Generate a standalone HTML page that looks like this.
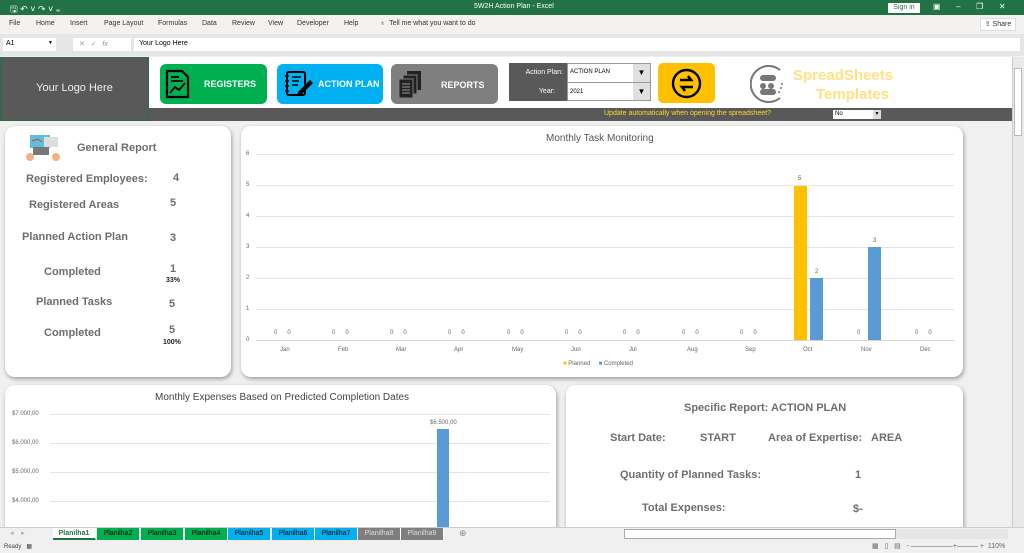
<!DOCTYPE html>
<html><head><meta charset="utf-8"><style>
*{margin:0;padding:0;box-sizing:border-box}
body{width:1024px;height:553px;overflow:hidden;font-family:"Liberation Sans",sans-serif;background:#f0f0f0;position:relative}
.a{position:absolute}
.t{position:absolute;white-space:nowrap}
.card{position:absolute;background:#fff;border-radius:10px;box-shadow:1px 2px 4px rgba(0,0,0,.35)}
.gr{color:#6e6e6e;font-weight:bold}
.btn{position:absolute;border-radius:6px;color:#fff;font-weight:bold;font-size:9px}
.ax{font-size:6px;color:#666}
.tab{position:absolute;top:528px;height:12px;font-size:7px;text-align:center;line-height:12px;border-right:1px solid #fff}
</style></head><body>
<div class="a" style="left:0;top:0;width:1024px;height:15px;background:#217346"></div>
<div class="t" style="left:10px;top:2px;color:#fff;font-size:9px">🖫 ↶ ˅ ↷ ˅ ₌</div>
<div class="t" style="left:474px;top:3px;color:#fff;font-size:7px">5W2H Action Plan - Excel</div>
<div class="a" style="left:888px;top:3px;width:32px;height:10px;background:#fff;color:#217346;font-size:7px;text-align:center;line-height:10px">Sign in</div>
<div class="t" style="left:933px;top:2px;color:#fff;font-size:8px">▣ &nbsp;&nbsp;&nbsp;&nbsp;&nbsp; – &nbsp;&nbsp;&nbsp;&nbsp;&nbsp; ❐ &nbsp;&nbsp;&nbsp;&nbsp;&nbsp; ✕</div>
<div class="a" style="left:0;top:15px;width:1024px;height:19px;background:#f3f2f1"></div>
<div class="t" style="left:9px;top:20px;font-size:7px;color:#333">File</div>
<div class="t" style="left:36px;top:20px;font-size:7px;color:#333">Home</div>
<div class="t" style="left:70px;top:20px;font-size:7px;color:#333">Insert</div>
<div class="t" style="left:104px;top:20px;font-size:7px;color:#333">Page Layout</div>
<div class="t" style="left:158px;top:20px;font-size:7px;color:#333">Formulas</div>
<div class="t" style="left:202px;top:20px;font-size:7px;color:#333">Data</div>
<div class="t" style="left:232px;top:20px;font-size:7px;color:#333">Review</div>
<div class="t" style="left:268px;top:20px;font-size:7px;color:#333">View</div>
<div class="t" style="left:297px;top:20px;font-size:7px;color:#333">Developer</div>
<div class="t" style="left:344px;top:20px;font-size:7px;color:#333">Help</div>
<div class="t" style="left:380px;top:20px;font-size:7px;color:#333">♁ &nbsp;Tell me what you want to do</div>
<div class="a" style="left:980px;top:18px;width:36px;height:13px;background:#fff;border:1px solid #ddd;font-size:7px;line-height:11px;text-align:center;color:#333">⇪ Share</div>
<div class="a" style="left:0;top:34px;width:1024px;height:22px;background:#e6e6e6"></div>
<div class="a" style="left:3px;top:38px;width:53px;height:13px;background:#fff;font-size:7px;padding:2px 3px">A1<span style="float:right;font-size:5px">▼</span></div>
<div class="a" style="left:73px;top:38px;width:58px;height:13px;background:#fff;font-size:7px;color:#999;padding:2px 6px">✕ &nbsp;&nbsp;✓ &nbsp;&nbsp;<i>fx</i></div>
<div class="a" style="left:134px;top:38px;width:886px;height:13px;background:#fff;font-size:7px;padding:2px 5px">Your Logo Here</div>
<div class="a" style="left:0;top:57px;width:1012px;height:64px;background:#fff"></div>
<div class="a" style="left:0;top:57px;width:149px;height:64px;background:#595959;border:1px solid #217346"></div>
<div class="t" style="left:0;top:82px;width:149px;text-align:center;color:#eee;font-size:11px">Your Logo Here</div>
<div class="a" style="left:149px;top:108px;width:863px;height:13px;background:#595959"></div>
<div class="t" style="left:604px;top:110px;color:#ffd829;font-size:7px">Update automatically when opening the spreadsheet?</div>
<div class="a" style="left:833px;top:110px;width:48px;height:9px;background:#fff;font-size:6px;padding-left:2px;line-height:9px">No<span style="float:right;background:#ddd;width:8px;text-align:center;font-size:5px">▼</span></div>
<div class="btn" style="left:160px;top:64px;width:107px;height:40px;background:#00b050"><svg class="a" style="left:5px;top:5px" width="26" height="30" viewBox="0 0 26 30"><path d="M2 2h15l6 6v20H2z" fill="none" stroke="#000" stroke-width="2.2"/><path d="M6 8h8M6 12h12M5 24l5-6 4 3 6-7" stroke="#000" stroke-width="1.8" fill="none"/></svg><span class="t" style="left:44px;top:15px">REGISTERS</span></div>
<div class="btn" style="left:277px;top:64px;width:106px;height:40px;background:#00b0f0"><svg class="a" style="left:7px;top:6px" width="30" height="28" viewBox="0 0 30 28"><rect x="3" y="2" width="18" height="23" rx="2" fill="none" stroke="#000" stroke-width="2"/><path d="M1 6h4M1 11h4M1 16h4M1 21h4M8 7h9M8 11h7M8 15h6" stroke="#000" stroke-width="1.6"/><path d="M14 22l12-12 3 3-12 12-4 1z" fill="#000"/></svg><span class="t" style="left:41px;top:15px">ACTION PLAN</span></div>
<div class="btn" style="left:391px;top:64px;width:107px;height:40px;background:#7f7f7f"><svg class="a" style="left:7px;top:6px" width="26" height="30" viewBox="0 0 26 30"><rect x="9" y="1" width="14" height="19" fill="#222"/><rect x="5" y="5" width="14" height="19" fill="#222" stroke="#7f7f7f"/><rect x="1" y="9" width="14" height="19" fill="#222" stroke="#7f7f7f"/><path d="M4 14h8M4 17h8M4 20h8M4 23h8" stroke="#999"/></svg><span class="t" style="left:50px;top:16px">REPORTS</span></div>
<div class="a" style="left:509px;top:63px;width:58px;height:38px;background:#595959"></div>
<div class="t" style="left:509px;top:69px;width:54px;text-align:right;color:#fff;font-size:7px">Action Plan:</div>
<div class="t" style="left:509px;top:88px;width:46px;text-align:right;color:#fff;font-size:7px">Year:</div>
<div class="a" style="left:567px;top:63px;width:84px;height:38px;background:#fff;border:1px solid #999"></div>
<div class="a" style="left:567px;top:82px;width:84px;height:1px;background:#999"></div>
<div class="t" style="left:570px;top:69px;font-size:6px">ACTION PLAN</div>
<div class="t" style="left:570px;top:89px;font-size:6px">2021</div>
<div class="a" style="left:633px;top:64px;width:17px;height:18px;background:#e0e0e0;font-size:8px;text-align:center;line-height:18px">▼</div>
<div class="a" style="left:633px;top:83px;width:17px;height:17px;background:#e0e0e0;font-size:8px;text-align:center;line-height:17px">▼</div>
<div class="a" style="left:658px;top:63px;width:57px;height:40px;background:#ffc000;border-radius:5px"><svg class="a" style="left:13px;top:5px" width="31" height="31" viewBox="0 0 31 31"><circle cx="15.5" cy="15.5" r="13.5" fill="none" stroke="#000" stroke-width="2.4"/><path d="M9 12h11l-3-4M22 19H11l3 4" stroke="#000" stroke-width="2.6" fill="none"/></svg></div>
<svg class="a" style="left:750px;top:64px" width="40" height="40" viewBox="0 0 40 40"><path d="M30 6A18 18 0 1 0 30 34" fill="none" stroke="#777" stroke-width="2"/><rect x="10" y="11" width="16" height="6" rx="3" fill="#777"/><circle cx="13" cy="22" r="3" fill="#777"/><circle cx="21" cy="22" r="3" fill="#777"/><rect x="10" y="25" width="16" height="6" rx="3" fill="#777"/><circle cx="32" cy="20" r="1" fill="#777"/><circle cx="31" cy="24" r="1" fill="#777"/><circle cx="29" cy="28" r="1" fill="#777"/></svg>
<div class="t" style="left:793px;top:67px;color:#ffd966;font-size:15px;font-weight:bold;opacity:.8">SpreadSheets</div>
<div class="t" style="left:816px;top:86px;color:#ffd966;font-size:15px;font-weight:bold;opacity:.8">Templates</div>
<div class="a" style="left:1012px;top:57px;width:12px;height:470px;background:#e9e9e9;border-left:1px solid #ccc"></div>
<div class="a" style="left:1014px;top:68px;width:8px;height:68px;background:#fff;border:1px solid #bbb"></div>
<div class="card" style="left:5px;top:126px;width:226px;height:251px"></div>
<svg class="a" style="left:26px;top:133px" width="36" height="28" viewBox="0 0 36 28"><rect x="4" y="2" width="20" height="13" fill="#5bc0de"/><rect x="18" y="4" width="14" height="10" fill="#ddd"/><rect x="7" y="14" width="16" height="8" fill="#777"/><circle cx="4" cy="24" r="4" fill="#f4b183"/><circle cx="30" cy="24" r="4" fill="#f4b183"/><path d="M6 8l6-2 4 3" stroke="#e33" fill="none"/></svg>
<div class="t gr" style="left:77px;top:142px;font-size:11px">General Report</div>
<div class="t gr" style="left:26px;top:173px;font-size:11px">Registered Employees:</div>
<div class="t gr" style="left:173px;top:172px;font-size:11px">4</div>
<div class="t gr" style="left:29px;top:199px;font-size:11px">Registered Areas</div>
<div class="t gr" style="left:170px;top:197px;font-size:11px">5</div>
<div class="t gr" style="left:22px;top:231px;font-size:11px">Planned Action Plan</div>
<div class="t gr" style="left:170px;top:232px;font-size:11px">3</div>
<div class="t gr" style="left:44px;top:266px;font-size:11px">Completed</div>
<div class="t gr" style="left:170px;top:263px;font-size:11px">1</div>
<div class="t" style="left:166px;top:277px;font-size:7px;font-weight:bold;color:#222">33%</div>
<div class="t gr" style="left:36px;top:296px;font-size:11px">Planned Tasks</div>
<div class="t gr" style="left:169px;top:298px;font-size:11px">5</div>
<div class="t gr" style="left:44px;top:327px;font-size:11px">Completed</div>
<div class="t gr" style="left:169px;top:324px;font-size:11px">5</div>
<div class="t" style="left:163px;top:339px;font-size:7px;font-weight:bold;color:#222">100%</div>
<div class="card" style="left:241px;top:126px;width:722px;height:251px"></div>
<div class="t" style="left:546px;top:133px;font-size:10px;color:#555">Monthly Task Monitoring</div>
<div class="a" style="left:256px;top:154px;width:698px;height:1px;background:#e4e4e4;box-shadow:0 31px #e4e4e4,0 62px #e4e4e4,0 93px #e4e4e4,0 124px #e4e4e4,0 155px #e4e4e4,0 186px #d4d4d4"></div>
<div class="t ax" style="left:246px;top:151px">6</div>
<div class="t ax" style="left:246px;top:182px">5</div>
<div class="t ax" style="left:246px;top:213px">4</div>
<div class="t ax" style="left:246px;top:244px">3</div>
<div class="t ax" style="left:246px;top:275px">2</div>
<div class="t ax" style="left:246px;top:306px">1</div>
<div class="t ax" style="left:246px;top:337px">0</div>
<div class="a" style="left:794px;top:186px;width:13px;height:154px;background:#ffc000"></div>
<div class="a" style="left:810px;top:278px;width:13px;height:62px;background:#5b9bd5"></div>
<div class="a" style="left:868px;top:247px;width:13px;height:93px;background:#5b9bd5"></div>
<div class="t ax" style="left:798px;top:176px">5</div>
<div class="t ax" style="left:815px;top:269px">2</div>
<div class="t ax" style="left:873px;top:238px">3</div>
<div class="t ax" style="left:274px;top:330px">0&nbsp;&nbsp;&nbsp;&nbsp;&nbsp;&nbsp;0</div>
<div class="t ax" style="left:332px;top:330px">0&nbsp;&nbsp;&nbsp;&nbsp;&nbsp;&nbsp;0</div>
<div class="t ax" style="left:390px;top:330px">0&nbsp;&nbsp;&nbsp;&nbsp;&nbsp;&nbsp;0</div>
<div class="t ax" style="left:448px;top:330px">0&nbsp;&nbsp;&nbsp;&nbsp;&nbsp;&nbsp;0</div>
<div class="t ax" style="left:507px;top:330px">0&nbsp;&nbsp;&nbsp;&nbsp;&nbsp;&nbsp;0</div>
<div class="t ax" style="left:565px;top:330px">0&nbsp;&nbsp;&nbsp;&nbsp;&nbsp;&nbsp;0</div>
<div class="t ax" style="left:623px;top:330px">0&nbsp;&nbsp;&nbsp;&nbsp;&nbsp;&nbsp;0</div>
<div class="t ax" style="left:682px;top:330px">0&nbsp;&nbsp;&nbsp;&nbsp;&nbsp;&nbsp;0</div>
<div class="t ax" style="left:740px;top:330px">0&nbsp;&nbsp;&nbsp;&nbsp;&nbsp;&nbsp;0</div>
<div class="t ax" style="left:857px;top:330px">0</div>
<div class="t ax" style="left:915px;top:330px">0&nbsp;&nbsp;&nbsp;&nbsp;&nbsp;&nbsp;0</div>
<div class="t ax" style="left:280px;top:347px">Jan</div>
<div class="t ax" style="left:338px;top:347px">Feb</div>
<div class="t ax" style="left:396px;top:347px">Mar</div>
<div class="t ax" style="left:454px;top:347px">Apr</div>
<div class="t ax" style="left:512px;top:347px">May</div>
<div class="t ax" style="left:571px;top:347px">Jun</div>
<div class="t ax" style="left:629px;top:347px">Jul</div>
<div class="t ax" style="left:687px;top:347px">Aug</div>
<div class="t ax" style="left:745px;top:347px">Sep</div>
<div class="t ax" style="left:803px;top:347px">Oct</div>
<div class="t ax" style="left:861px;top:347px">Nov</div>
<div class="t ax" style="left:920px;top:347px">Dec</div>
<div class="t ax" style="left:563px;top:361px"><span style="color:#ffc000">■</span> Planned &nbsp;&nbsp;&nbsp; <span style="color:#5b9bd5">■</span> Completed</div>
<div class="card" style="left:5px;top:385px;width:551px;height:160px"></div>
<div class="t" style="left:155px;top:392px;font-size:10px;color:#444">Monthly Expenses Based on Predicted Completion Dates</div>
<div class="a" style="left:50px;top:414px;width:500px;height:1px;background:#e4e4e4;box-shadow:0 29px #e4e4e4,0 58px #e4e4e4,0 87px #e4e4e4"></div>
<div class="t ax" style="left:12px;top:411px">$7.000,00</div>
<div class="t ax" style="left:12px;top:440px">$6.000,00</div>
<div class="t ax" style="left:12px;top:469px">$5.000,00</div>
<div class="t ax" style="left:12px;top:498px">$4.000,00</div>
<div class="t ax" style="left:430px;top:420px">$6.500,00</div>
<div class="a" style="left:437px;top:429px;width:12px;height:100px;background:#5b9bd5"></div>
<div class="card" style="left:566px;top:385px;width:397px;height:160px"></div>
<div class="t gr" style="left:684px;top:402px;font-size:11px">Specific Report: ACTION PLAN</div>
<div class="t gr" style="left:610px;top:432px;font-size:11px">Start Date:</div>
<div class="t gr" style="left:700px;top:432px;font-size:11px">START</div>
<div class="t gr" style="left:768px;top:432px;font-size:11px">Area of Expertise:</div>
<div class="t gr" style="left:871px;top:432px;font-size:11px">AREA</div>
<div class="t gr" style="left:620px;top:469px;font-size:11px">Quantity of Planned Tasks:</div>
<div class="t gr" style="left:855px;top:469px;font-size:11px">1</div>
<div class="t gr" style="left:642px;top:502px;font-size:11px">Total Expenses:</div>
<div class="t gr" style="left:853px;top:503px;font-size:11px">$-</div>
<div class="a" style="left:0;top:527px;width:1024px;height:14px;background:#f0f0f0;border-top:1px solid #ccc"></div>
<div class="t" style="left:10px;top:529px;font-size:7px;color:#aaa">◂ &nbsp;&nbsp; ▸</div>
<div class="tab" style="left:53px;width:43px;background:#fff;color:#217346;font-weight:bold;border-bottom:2px solid #217346">Planilha1</div>
<div class="tab" style="left:97px;width:43px;background:#00b050">Planilha2</div>
<div class="tab" style="left:141px;width:43px;background:#00b050">Planilha3</div>
<div class="tab" style="left:185px;width:43px;background:#00b050">Planilha4</div>
<div class="tab" style="left:228px;width:43px;background:#00b0f0">Planilha5</div>
<div class="tab" style="left:272px;width:43px;background:#00b0f0">Planilha6</div>
<div class="tab" style="left:315px;width:43px;background:#00b0f0">Planilha7</div>
<div class="tab" style="left:358px;width:43px;background:#7f7f7f;color:#ddd">Planilha8</div>
<div class="tab" style="left:401px;width:43px;background:#7f7f7f;color:#ddd">Planilha9</div>
<div class="t" style="left:459px;top:528px;font-size:9px;color:#888">⊕</div>
<div class="a" style="left:624px;top:529px;width:272px;height:10px;background:#fff;border:1px solid #aaa"></div>
<div class="a" style="left:896px;top:529px;width:112px;height:10px;background:#e6e6e6"></div>
<div class="a" style="left:0;top:541px;width:1024px;height:12px;background:#f0f0f0"></div>
<div class="t" style="left:4px;top:543px;font-size:6px;color:#444">Ready &nbsp;&nbsp;▦</div>
<div class="t" style="left:872px;top:542px;font-size:7px;color:#666">▦ &nbsp;&nbsp;▯ &nbsp;&nbsp;▤ &nbsp;&nbsp;- ——————+——— + &nbsp;110%</div>
</body></html>
